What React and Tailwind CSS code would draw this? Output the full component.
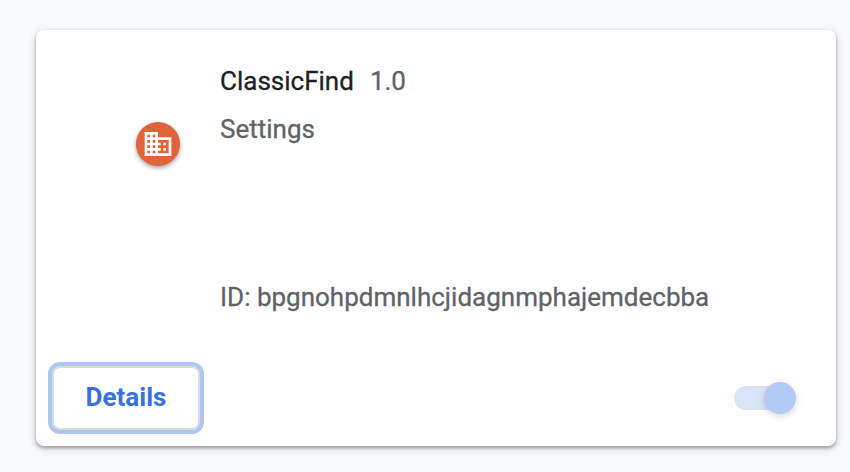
function ExtensionIcon() {
  return (
    <div className="mt-[92px] flex h-11 w-11 shrink-0 items-center justify-center rounded-full bg-[#e0633a] shadow-[0_2px_4px_rgba(60,64,67,0.5)]">
      <svg viewBox="0 0 24 24" className="h-8 w-8" fill="#fff" aria-hidden="true">
        <path d="M12 7V3H2v18h20V7H12zM6 19H4v-2h2v2zm0-4H4v-2h2v2zm0-4H4V9h2v2zm0-4H4V5h2v2zm4 12H8v-2h2v2zm0-4H8v-2h2v2zm0-4H8V9h2v2zm0-4H8V5h2v2zm10 12h-8v-2h2v-2h-2v-2h2v-2h-2V9h8v10zm-2-8h-2v2h2v-2zm0 4h-2v2h2v-2z" />
      </svg>
    </div>
  )
}

function Toggle() {
  return (
    <button
      type="button"
      role="switch"
      aria-checked="true"
      aria-label="Enable extension"
      className="mt-1 flex h-6 w-[60px] items-center justify-end rounded-full bg-[#d9e4f9]"
    >
      <span className="-mr-0.5 h-8 w-8 shrink-0 rounded-full bg-[#b2caf4] shadow-[0_2px_6px_rgba(60,64,67,0.22)]" />
    </button>
  )
}

function App() {
  return (
    <main className="h-[472px] w-[850px] overflow-hidden bg-[#f8f9fa] pt-[30px] pl-9 font-[Roboto,sans-serif]">
      <section className="flex h-[416px] w-[800px] flex-col rounded-lg bg-white shadow-[0_2px_3px_rgba(60,64,67,0.4),0_2px_6px_2px_rgba(60,64,67,0.15)]">
        <div className="flex h-[332px] pl-[100px]">
          <ExtensionIcon />
          <div className="flex flex-col pt-[31px] pl-10 text-[26px] leading-10 text-[#5f6368] [-webkit-text-stroke:0.3px]">
            <div className="flex gap-4">
              <h1 className="text-[#202124]">ClassicFind</h1>
              <span>1.0</span>
            </div>
            <p className="mt-2">Settings</p>
            <p className="mt-32">ID: bpgnohpdmnlhcjidagnmphajemdecbba</p>
          </div>
        </div>
        <div className="flex items-center justify-between pr-[42px] pl-4">
          <button
            type="button"
            className="mt-1 h-16 w-[148px] rounded-lg border-2 border-[#dadce0] bg-white pb-0.5 text-[26px] font-bold text-[#3871e0] ring-4 ring-[#aec6f4]"
          >
            Details
          </button>
          <Toggle />
        </div>
      </section>
    </main>
  )
}

export default App
